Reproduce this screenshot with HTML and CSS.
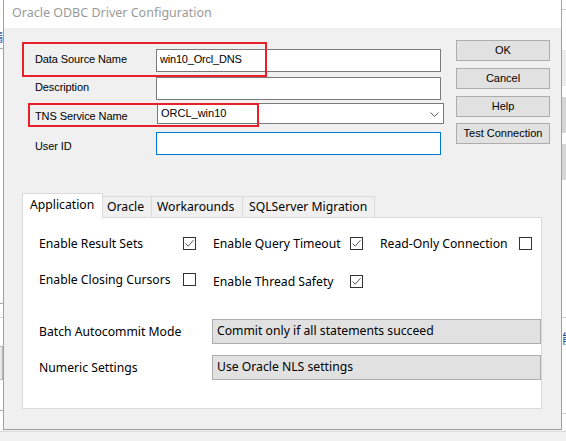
FILE: index.html
```html
<!DOCTYPE html>
<html>
<head>
<meta charset="utf-8">
<link rel="stylesheet" href="styles.css">
</head>
<body>
<div class="screen">
  <div class="desk">
    <div class="bg-left">
      <div class="bl-glyph">嫣</div>
      <div class="bl-line l1"></div>
      <div class="bl-line l2"></div>
      <div class="bl-line l3"></div>
      <div class="bl-icon"></div>
      <div class="bl-line l4"></div>
    </div>
    <div class="window">
      <div class="titlebar">Oracle ODBC Driver Configuration</div>
      <div class="body">
        <div class="top">
          <div class="form">
            <div class="row r1">
              <div class="label">Data Source Name</div>
              <div class="edit">win10_Orcl_DNS</div>
            </div>
            <div class="row r2">
              <div class="label">Description</div>
              <div class="edit"></div>
            </div>
            <div class="row r3">
              <div class="label">TNS Service Name</div>
              <div class="combo">ORCL_win10
                <svg class="chev" width="9" height="5" viewBox="0 0 9 5"><path d="M0.5 0.5 L4.5 4.5 L8.5 0.5" fill="none" stroke="#606060" stroke-width="1"/></svg>
              </div>
            </div>
            <div class="row r4">
              <div class="label">User ID</div>
              <div class="edit focus"></div>
            </div>
          </div>
          <div class="buttons">
            <div class="btn">OK</div>
            <div class="btn">Cancel</div>
            <div class="btn">Help</div>
            <div class="btn last">Test Connection</div>
          </div>
        </div>
        <div class="tabs">
          <div class="tab active">Application</div>
          <div class="tab t-oracle">Oracle</div>
          <div class="tab t-work">Workarounds</div>
          <div class="tab t-sql">SQLServer Migration</div>
        </div>
        <div class="panel">
          <div class="checks">
            <div class="citem c1"><span class="clabel">Enable Result Sets</span><span class="cb checked"><svg width="11" height="11" viewBox="0 0 11 11"><path d="M1.5 5.5 L4.2 8.2 L9.5 2.2" fill="none" stroke="#5a5a5a" stroke-width="1"/></svg></span></div>
            <div class="citem c2"><span class="clabel">Enable Query Timeout</span><span class="cb checked"><svg width="11" height="11" viewBox="0 0 11 11"><path d="M1.5 5.5 L4.2 8.2 L9.5 2.2" fill="none" stroke="#5a5a5a" stroke-width="1"/></svg></span></div>
            <div class="citem c3"><span class="clabel">Read-Only Connection</span><span class="cb"></span></div>
          </div>
          <div class="checks row2">
            <div class="citem c1"><span class="clabel">Enable Closing Cursors</span><span class="cb"></span></div>
            <div class="citem c2 lower"><span class="clabel">Enable Thread Safety</span><span class="cb checked"><svg width="11" height="11" viewBox="0 0 11 11"><path d="M1.5 5.5 L4.2 8.2 L9.5 2.2" fill="none" stroke="#5a5a5a" stroke-width="1"/></svg></span></div>
          </div>
          <div class="selrow first">
            <div class="slabel">Batch Autocommit Mode</div>
            <div class="select">Commit only if all statements succeed</div>
          </div>
          <div class="selrow">
            <div class="slabel">Numeric Settings</div>
            <div class="select">Use Oracle NLS settings</div>
          </div>
        </div>
      </div>
    </div>
    <div class="bg-right">
      <div class="br-line b1"></div>
      <div class="br-strip s1"></div>
      <div class="br-strip s2"></div>
      <div class="br-strip s3"></div>
      <div class="br-line b2"></div>
      <div class="br-glyph">能</div>
      <div class="br-line b3"></div>
    </div>
  </div>
  <div class="bottom"></div>
  <div class="redbox box1"></div>
  <div class="redbox box2"></div>
</div>
</body>
</html>
```
FILE: styles.css
```css
* { box-sizing: border-box; }
html, body { margin: 0; padding: 0; }
body { width: 566px; height: 441px; overflow: hidden; background: #f0f0f0; }
.screen { position: relative; width: 566px; height: 441px; background: #f0f0f0; font-family: "Liberation Sans", Arial, sans-serif; }
.desk { display: flex; height: 431px; }

.bg-left { position: relative; width: 3px; height: 430px; background: #fff; overflow: hidden; }
.bl-line { position: absolute; left: 0; width: 3px; height: 1px; background: #a8a8a8; }
.bl-line.l1 { top: 48px; }
.bl-line.l2 { top: 303px; }
.bl-line.l3 { top: 317px; background: #d8d8d8; }
.bl-line.l4 { top: 410px; }
.bl-glyph { position: absolute; left: -9px; top: 28px; font-size: 12px; color: #3a5aa0; font-family: "Noto Sans CJK SC", sans-serif; }
.bl-icon { position: absolute; left: -4px; top: 346px; width: 7px; height: 34px; border: 1px solid #b8b8b8; background: #e8e8e8; }

.bg-right { position: relative; width: 4px; height: 430px; background: #fff; overflow: hidden; }
.br-line { position: absolute; left: 0; width: 4px; height: 1px; background: #c8c8c8; }
.br-line.b1 { top: 9px; }
.br-line.b2 { top: 317px; }
.br-line.b3 { top: 413px; }
.br-strip { position: absolute; left: 0; width: 4px; }
.br-strip.s1 { top: 50px; height: 36px; background: #ececec; }
.br-strip.s2 { top: 97px; height: 36px; background: #d5d5d5; }
.br-strip.s3 { top: 144px; height: 36px; background: #d5d5d5; }
.br-glyph { position: absolute; left: 0; top: 328px; font-size: 13px; color: #2a4a9a; font-family: "Noto Sans CJK SC", sans-serif; }

.bottom { height: 10px; border-top: 1px solid #dadada; background: #f0f0f0; }

.window { width: 559px; height: 430px; border: 1px solid #a0a0a0; border-top: none; display: flex; flex-direction: column; background: #f0f0f0; }
.titlebar { height: 28px; background: #fff; padding-left: 8px; line-height: 26px; font-family: "Noto Sans", sans-serif; font-size: 12.5px; color: #9a9a9a; }
.body { flex: 1; padding-top: 12px; }

.top { display: flex; }
.form { margin-left: 31px; margin-top: 9px; }
.row { display: flex; align-items: center; }
.r1 { height: 23px; }
.r2 { height: 23px; margin-top: 5px; }
.r3 { height: 21px; margin-top: 3px; }
.r4 { height: 23px; margin-top: 8px; }
.label { width: 121px; font-size: 11px; letter-spacing: -0.1px; color: #000; }
.r1 .label, .r2 .label { padding-bottom: 3px; }
.r3 .label, .r4 .label { padding-top: 4px; }
.edit { width: 285px; height: 100%; background: #fff; border: 1px solid #7a7a7a; font-size: 11px; line-height: 19px; padding-left: 3px; letter-spacing: -0.2px; color: #000; }
.edit.focus { border-color: #0078d7; }
.combo { position: relative; width: 287px; height: 100%; margin-left: 1px; background: #fff; border: 1px solid #7a7a7a; font-size: 11px; line-height: 18px; padding-left: 3px; color: #000; }
.combo .chev { position: absolute; right: 4px; top: 8px; }

.buttons { margin-left: auto; margin-right: 11px; display: flex; flex-direction: column; }
.btn { width: 94px; height: 21px; margin-bottom: 7px; background: #e1e1e1; border: 1px solid #adadad; font-size: 11px; line-height: 18px; text-align: center; color: #000; }
.btn:nth-child(3) { margin-bottom: 6px; }
.btn.last { margin-bottom: 0; }

.tabs { display: flex; align-items: flex-end; margin-left: 18px; margin-top: 38px; height: 24px; font-family: "Noto Sans", sans-serif; font-size: 12.2px; color: #000; position: relative; z-index: 1; }
.tab { height: 21px; border-top: 1px solid #d9d9d9; border-right: 1px solid #d9d9d9; background: #f0f0f0; line-height: 20px; }
.tab.active { width: 81px; height: 25px; margin-bottom: -1px; border: 1px solid #d9d9d9; border-bottom: none; background: #fff; padding-left: 7px; line-height: 22px; }
.t-oracle { width: 49px; padding-left: 4px; }
.t-work { width: 91px; padding-left: 5px; }
.t-sql { width: 132px; padding-left: 6px; }

.panel { margin-left: 18px; width: 520px; height: 192px; background: #fff; border: 1px solid #d9d9d9; padding: 15px 0 0 16px; font-family: "Noto Sans", sans-serif; font-size: 12.2px; color: #000; }
.checks { display: flex; height: 20px; align-items: center; }
.checks.row2 { margin-top: 16px; }
.citem { display: flex; align-items: center; height: 20px; }
.citem.c1 { width: 174px; }
.citem.c1 .clabel { width: 144px; }
.citem.c2 { width: 167px; }
.citem.c2 .clabel { width: 137px; }
.citem.c3 .clabel { width: 139px; }
.citem.lower { margin-top: 5px; }
.cb { width: 13px; height: 13px; border: 1px solid #333; background: #fff; display: flex; align-items: center; justify-content: center; }
.cb svg { display: block; }

.selrow { display: flex; align-items: center; height: 25px; margin-top: 11px; }
.selrow.first { margin-top: 30px; }
.slabel { width: 173px; }
.select { width: 329px; height: 25px; background: #e1e1e1; border: 1px solid #adadad; padding-left: 4px; line-height: 22px; }

.redbox { position: absolute; border: 2px solid #e8202a; }
.box1 { left: 22px; top: 42px; width: 245px; height: 35px; }
.box2 { left: 28px; top: 103px; width: 231px; height: 24px; }
```
